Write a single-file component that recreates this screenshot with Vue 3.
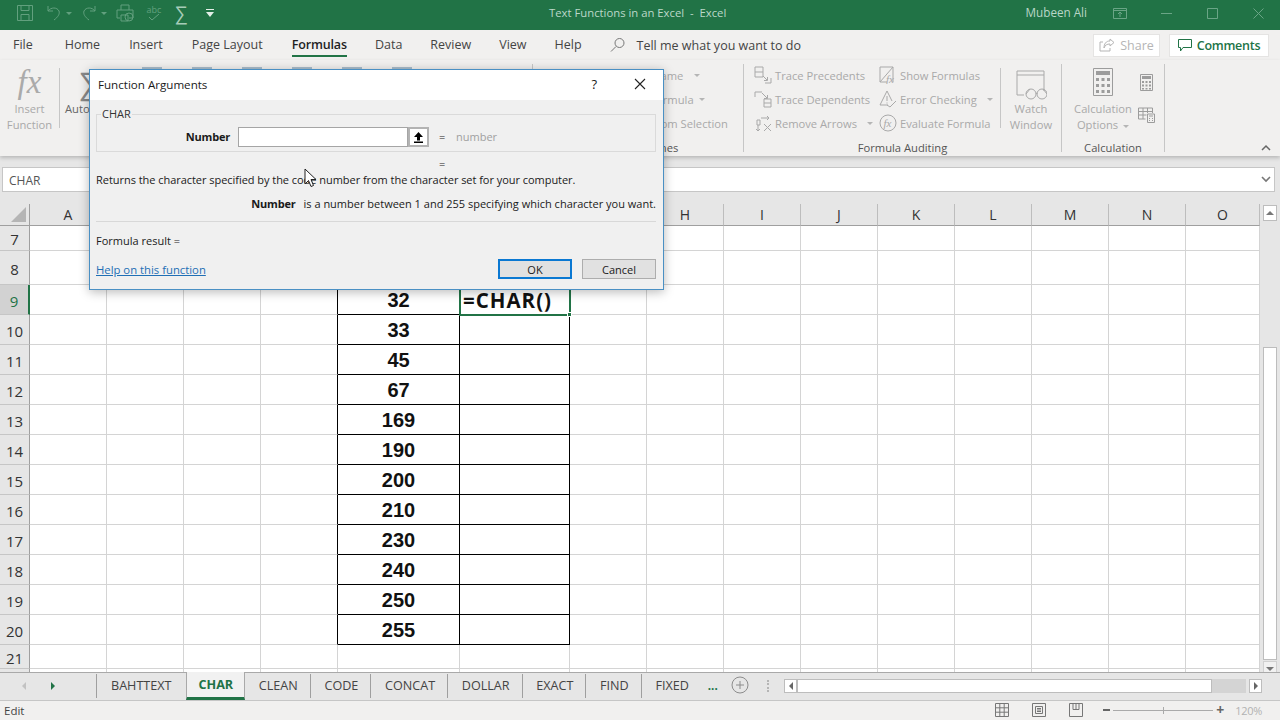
<script setup>
const tabs = ['File', 'Home', 'Insert', 'Page Layout', 'Formulas', 'Data', 'Review', 'View', 'Help']
const sheets = ['BAHTTEXT', 'CHAR', 'CLEAN', 'CODE', 'CONCAT', 'DOLLAR', 'EXACT', 'FIND', 'FIXED']
const columns = ['A', 'B', 'C', 'D', 'E', 'F', 'G', 'H', 'I', 'J', 'K', 'L', 'M', 'N', 'O']
const rows = [7, 8, 9, 10, 11, 12, 13, 14, 15, 16, 17, 18, 19, 20, 21, 22]
const values = {
  9: 32, 10: 33, 11: 45, 12: 67, 13: 169, 14: 190,
  15: 200, 16: 210, 17: 230, 18: 240, 19: 250, 20: 255
}

function cellClass(col, row) {
  return {
    'edge-right': row <= 20 && (col === 'D' || col === 'E' || col === 'F'),
    'edge-bottom': row >= 8 && row <= 20 && (col === 'E' || col === 'F'),
    active: col === 'F' && row === 9,
    last: row === 22
  }
}

function tabClass(sheet) {
  return {
    on: sheet === 'CHAR',
    'no-sep': sheet === 'BAHTTEXT' || sheet === 'FIXED'
  }
}
</script>

<template>
  <div class="window">
    <header class="titlebar">
      <div class="qat">
        <svg class="ico" width="18" height="18" viewBox="0 0 18 18"><path d="M1.5 1.5h15v15h-15z M5 1.5v5h8v-5 M5 16.5v-6h8v6" /></svg>
        <svg class="ico undo" width="16" height="16" viewBox="0 0 16 16"><path d="M2 1v5h5 M2 6c3-4 9-4 11 0 1 3-1 6-5 9" /></svg>
        <i class="caret" />
        <svg class="ico redo" width="16" height="16" viewBox="0 0 16 16"><path d="M14 1v5h-5 M14 6c-3-4-9-4-11 0-1 3 1 6 5 9" /></svg>
        <i class="caret" />
        <svg class="ico print" width="18" height="18" viewBox="0 0 18 18"><path d="M5 6V1h8v5 M1 6h16v8H13 M1 6v8h3 M5 11h7v6H5z" /><circle cx="13" cy="13" r="4" /></svg>
        <span class="abc">abc<svg class="ico" width="12" height="7" viewBox="0 0 12 7"><path d="M1 3l3 3 7-6" /></svg></span>
        <span class="sigma">∑</span>
        <svg class="more" width="8" height="8" viewBox="0 0 8 8"><path d="M0 0h8v1H0z M0 3h8L4 8z" /></svg>
      </div>
      <div class="doc-title">Text Functions in an Excel&nbsp; -&nbsp; Excel</div>
      <div class="win-side">
        <span class="user">Mubeen Ali</span>
        <button class="win-btn"><svg class="ico" width="14" height="11" viewBox="0 0 14 11"><path d="M.5.5h13v10H.5z M.5 2.5h13 M7 9V4.500 M5 6l2-2 2 2" /></svg></button>
        <button class="win-btn"><svg class="ico" width="11" height="11" viewBox="0 0 11 11"><path d="M0 5.500h11" /></svg></button>
        <button class="win-btn"><svg class="ico" width="11" height="11" viewBox="0 0 11 11"><path d="M.5.5h10v10H.5z" /></svg></button>
        <button class="win-btn"><svg class="ico" width="11" height="11" viewBox="0 0 11 11"><path d="M.5.5l10 10 M10.500.5l-10 10" /></svg></button>
      </div>
    </header>

    <nav class="menu">
      <span v-for="tab in tabs" :key="tab" :class="['menu-item', { current: tab === 'Formulas' }]">{{ tab }}</span>
      <span class="tell">
        <svg class="ico" width="16" height="16" viewBox="0 0 16 16"><circle cx="9.500" cy="6" r="4.500" /><path d="M6 9.500l-5 5" /></svg>
        Tell me what you want to do
      </span>
      <span class="share">
        <svg class="ico" width="16" height="14" viewBox="0 0 16 14"><path d="M11 1l4 3.500-4 3.500V6C8 6 6 7 5 10 5 6 7 2.800 11 3z M4 4H1v9h10v-3" /></svg>
        Share
      </span>
      <span class="comments">
        <svg class="ico" width="14" height="13" viewBox="0 0 14 13"><path d="M.5.500h13v8H5L2.500 12V8.500h-2z" /></svg>
        Comments
      </span>
    </nav>

    <section class="ribbon">
      <div class="group library">
        <div class="fx-btn">
          <span class="fx">fx</span>
          <span class="big-label">Insert<br>Function</span>
        </div>
        <div class="autosum">
          <span class="big-sigma">∑</span>
          <span class="big-label">AutoSum</span>
        </div>
        <i v-for="n in 6" :key="n" class="lib-top" />
      </div>

      <div class="group names">
        <div class="names-body">
          <span class="line">Define Name <i class="dd" /></span>
          <span class="line">Use in Formula<i class="dd near" /></span>
          <span class="line">Create from Selection</span>
        </div>
        <div class="group-label">Defined Names</div>
      </div>

      <div class="group auditing">
        <div class="audit-body">
          <div class="audit-col">
            <span class="line">
              <svg class="ico" width="18" height="18" viewBox="0 0 18 18"><path d="M1 1h8v10H1z M1 6h8 M17 12v5h-6 M9 10l4 4 M13.500 11v3.500H10" /></svg>
              Trace Precedents
            </span>
            <span class="line">
              <svg class="ico" width="18" height="18" viewBox="0 0 18 18"><path d="M1 7V2h7 M10 9h7v8h-7z M10 13h7 M8 3l5 5 M13.500 5v3.500H10" /></svg>
              Trace Dependents
            </span>
            <span class="line">
              <svg class="ico" width="18" height="18" viewBox="0 0 18 18"><path d="M3 6h3v5H3z M4 11v6 M2 15l2 2 2-2 M7 4h8 M13 2l2 2-2 2 M10 10l7 7 M17 10l-7 7" /></svg>
              Remove Arrows <i class="dd wide" />
            </span>
          </div>
          <div class="audit-col">
            <span class="line">
              <svg class="ico" width="18" height="18" viewBox="0 0 18 18"><path d="M1 1h13v15 M1 1v15h7 M1 16L14 1" /><text x="7" y="17" class="svg-fx">fx</text></svg>
              Show Formulas
            </span>
            <span class="line">
              <svg class="ico" width="18" height="18" viewBox="0 0 18 18"><path d="M8 1L1 15h8 M8 1l5 10 M8 6v5 M8 12.500v1 M8 15l3 2 6-6" /></svg>
              Error Checking <i class="dd wide" />
            </span>
            <span class="line">
              <svg class="ico" width="18" height="18" viewBox="0 0 18 18"><circle cx="9" cy="9" r="8" /><text x="4.500" y="13" class="svg-fx">fx</text></svg>
              Evaluate Formula
            </span>
          </div>
          <div class="watch">
            <svg class="ico" width="32" height="30" viewBox="0 0 32 30"><path d="M2 1h27v20 M2 1v24h7 M2 5h27" /><circle cx="16" cy="24" r="5" /><circle cx="27" cy="24" r="5" /><path d="M21 24c1-1.500 1-1.500 1 0 M11 24l4-5 M32 24l-4-5" /></svg>
            <span class="big-label">Watch<br>Window</span>
          </div>
        </div>
        <div class="group-label">Formula Auditing</div>
      </div>

      <div class="group calculation">
        <div class="calc-body">
          <div class="calc-big">
            <svg class="ico" width="20" height="28" viewBox="0 0 20 28"><path d="M.5.500h19v27H.5z" /><path class="solid" d="M3 3h14v4H3z M3 10h3v3H3z M8.500 10h3v3h-3z M14 10h3v3h-3z M3 16h3v3H3z M8.500 16h3v3h-3z M14 16h3v3h-3z M3 22h3v3H3z M8.500 22h3v3h-3z M14 22h3v3h-3z" /></svg>
            <span class="big-label">Calculation<br>Options <i class="dd near" /></span>
          </div>
          <div class="calc-small">
            <svg class="ico" width="13" height="17" viewBox="0 0 13 17"><path d="M.5.500h12v16H.5z" /><path class="solid" d="M2 2h9v3H2z M2 7h2v2H2z M5.500 7h2v2h-2z M9 7h2v2H9z M2 10.500h2v2H2z M5.500 10.500h2v2h-2z M9 10.500h2v2H9z M2 14h2v1.500H2z M5.500 14h2v1.500h-2z M9 14h2v1.500H9z" /></svg>
            <svg class="ico" width="17" height="16" viewBox="0 0 17 16"><path d="M.5 1h14v5 M.5 1v11h7 M.5 4.500h14 M.5 8h8 M5 1v11 M9.500 1v5 M9.500 7h7v8.500h-7z M11 9h4 M11 11.500h1 M14 11.500h1 M11 13.500h1 M14 13.500h1" /></svg>
          </div>
        </div>
        <div class="group-label">Calculation</div>
      </div>

      <svg class="collapse" width="10" height="7" viewBox="0 0 10 7"><path d="M1 6l4-4 4 4" /></svg>
    </section>

    <div class="formula-row">
      <div class="name-box">CHAR</div>
      <div class="formula-input">
        <svg class="chevron" width="10" height="7" viewBox="0 0 10 7"><path d="M1 1l4 4 4-4" /></svg>
      </div>
    </div>

    <div class="sheet">
      <div class="grid">
        <div class="corner"><i class="corner-mark" /></div>
        <div v-for="col in columns" :key="col" class="col-head">{{ col }}</div>
        <template v-for="row in rows" :key="row">
          <div :class="['row-head', { selected: row === 9, last: row === 22 }]">{{ row === 22 ? '' : row }}</div>
          <div v-for="col in columns" :key="col" :class="['cell', cellClass(col, row)]">
            <template v-if="col === 'E'">{{ values[row] }}</template>
            <span v-else-if="col === 'F' && row === 9" class="entry">=CHAR()</span>
          </div>
        </template>
      </div>
      <div class="vscroll">
        <span class="scroll-btn up"><i class="tri-up" /></span>
        <span class="vthumb" />
        <span class="scroll-btn down"><i class="tri-down" /></span>
      </div>
    </div>

    <div class="sheet-bar">
      <div class="sheet-nav">
        <i class="tri-left dim" />
        <i class="tri-right green" />
      </div>
      <span v-for="sheet in sheets" :key="sheet" :class="['sheet-tab', tabClass(sheet)]">{{ sheet }}</span>
      <span class="dots">...</span>
      <span class="add-sheet">
        <svg class="ico" width="18" height="18" viewBox="0 0 18 18"><circle cx="9" cy="9" r="8" /><path d="M9 5v8 M5 9h8" /></svg>
      </span>
      <i class="splitter" />
      <div class="hscroll">
        <span class="h-btn"><i class="tri-left" /></span>
        <span class="hthumb" />
        <span class="h-rest" />
        <span class="h-btn end"><i class="tri-right" /></span>
      </div>
    </div>

    <footer class="status">
      <span class="mode">Edit</span>
      <div class="status-right">
        <svg class="ico" width="14" height="14" viewBox="0 0 14 14"><path d="M.5.500h13v13H.5z M.5 4.800h13 M.5 9.200h13 M4.800.5v13 M9.200.5v13" /></svg>
        <svg class="ico" width="14" height="14" viewBox="0 0 14 14"><path d="M.5.500h13v13H.5z M3.500 3.500h7v7h-7z M5 5.500h4 M5 7h4 M5 8.500h4" /></svg>
        <svg class="ico" width="14" height="14" viewBox="0 0 14 14"><path d="M.5.500h13v13H.5z M4 .5v6h6v-6 M7 .5v6" /></svg>
        <div class="zoom">
          <i class="zoom-minus" />
          <span class="slider"><i class="slider-tick" /></span>
          <span class="zoom-plus">+</span>
        </div>
        <span class="zoom-value">120%</span>
      </div>
    </footer>

    <div class="dialog">
      <div class="dialog-title">
        <span>Function Arguments</span>
        <span class="help-mark">?</span>
        <svg class="close" width="12" height="12" viewBox="0 0 12 12"><path d="M1 1l10 10 M11 1L1 11" /></svg>
      </div>
      <div class="dialog-body">
        <fieldset class="args">
          <legend>CHAR</legend>
          <div class="arg-row">
            <label class="arg-label">Number</label>
            <span class="arg-input" />
            <span class="arg-btn">
              <svg width="11" height="11" viewBox="0 0 11 11"><path d="M5.500 0L10 5H7v3.500H4V5H1z M1 9.500h9V11H1z" /></svg>
            </span>
            <span class="equals">=</span>
            <span class="arg-hint">number</span>
          </div>
        </fieldset>
        <div class="equals-line">=</div>
        <div class="desc">Returns the character specified by the code number from the character set for your computer.</div>
        <div class="arg-desc"><b>Number</b><span>is a number between 1 and 255 specifying which character you want.</span></div>
        <div class="rule" />
        <div class="result">Formula result =</div>
        <div class="actions">
          <a class="help-link">Help on this function</a>
          <button class="dlg-btn default">OK</button>
          <button class="dlg-btn">Cancel</button>
        </div>
      </div>
    </div>

    <svg class="cursor" width="13" height="20" viewBox="0 0 13 20">
      <path d="M1 1v15l3.500-3.500 2.500 6 2.500-1-2.500-6H12z" />
    </svg>
  </div>
</template>

<style>
html, body {
  margin: 0;
  background: #e6e6e6;
}
</style>

<style scoped>
.window {
  position: relative;
  width: 1280px;
  height: 720px;
  display: flex;
  flex-direction: column;
  overflow: hidden;
  font-family: "Open Sans", "Noto Sans", sans-serif;
  font-size: 11.5px;
  color: #444;
  background: #e6e6e6;
}

.ico {
  fill: none;
  stroke: currentColor;
  stroke-width: 1;
  flex: none;
}

.ico .solid {
  fill: currentColor;
  stroke: none;
}

.svg-fx {
  font-family: "Liberation Serif", serif;
  font-style: italic;
  font-size: 11px;
  fill: currentColor;
  stroke: none;
}

/* title bar */
.titlebar {
  height: 30px;
  flex: none;
  box-sizing: border-box;
  padding-bottom: 4px;
  display: flex;
  align-items: center;
  background: #217346;
  color: #b7d5c4;
}

.qat {
  display: flex;
  align-items: center;
  color: #62a07e;
  padding-left: 16px;
  width: 484px;
}

.qat .undo { margin-left: 12px; }
.qat .redo { margin-left: 9px; }
.qat .print { margin-left: 9px; }

.caret {
  width: 0;
  height: 0;
  margin-left: 4px;
  border: 3px solid transparent;
  border-top: 3px solid #62a07e;
  border-bottom: 0;
}

.abc {
  margin-left: 12px;
  width: 16px;
  font-size: 9px;
  line-height: 9px;
  display: flex;
  flex-direction: column;
  align-items: center;
}

.sigma {
  margin-left: 13px;
  font-size: 19px;
  line-height: 20px;
  color: #a6ccb8;
}

.more {
  margin-left: 19px;
  fill: #e3efe8;
}

.doc-title {
  width: 177px;
  margin-left: 49px;
  margin-bottom: 2px;
  font-size: 11.3px;
  white-space: nowrap;
  color: #bcd8c9;
}

.win-side {
  margin-left: auto;
  margin-right: -1px;
  display: flex;
  align-items: center;
}

.user {
  font-size: 11.7px;
  margin-right: 10px;
  margin-bottom: 2px;
  color: #b9d6c6;
}

.win-btn {
  width: 46px;
  height: 26px;
  padding: 0;
  border: 0;
  background: none;
  color: #6aa586;
  display: flex;
  align-items: center;
  justify-content: center;
}

/* tabs */
.menu {
  height: 30px;
  flex: none;
  display: flex;
  align-items: center;
  background: #f1f0ef;
  padding-left: 13px;
  font-size: 12.5px;
}

.menu-item {
  margin-right: 29px;
  height: 30px;
  line-height: 30px;
  color: #444;
  white-space: nowrap;
  box-sizing: border-box;
}

.menu-item:first-child {
  margin-right: 32px;
}

.menu-item.current {
  color: #1f1f1f;
  font-weight: 600;
  letter-spacing: -0.15px;
  margin-right: 28px;
  border-bottom: 2px solid #217346;
  height: 27px;
  line-height: 30px;
  align-self: flex-start;
}

.menu-item.current ~ .menu-item {
  margin-right: 28px;
}

.tell {
  display: flex;
  align-items: center;
  gap: 11px;
  white-space: nowrap;
  color: #444;
}

.tell .ico {
  color: #777;
}

.share, .comments {
  height: 23px;
  box-sizing: border-box;
  display: flex;
  align-items: center;
  justify-content: center;
  gap: 5px;
  background: #fff;
  border: 1px solid #e5e4e3;
}

.share {
  margin-left: auto;
  width: 67px;
  color: #b5b5b5;
}

.comments {
  margin-left: 9px;
  margin-right: 11px;
  width: 100px;
  color: #217346;
  font-weight: 600;
  letter-spacing: -0.25px;
}

/* ribbon */
.ribbon {
  position: relative;
  z-index: 1;
  height: 96px;
  flex: none;
  display: flex;
  background: #f1f0ef;
  box-shadow: 0 2px 4px rgba(0, 0, 0, 0.2);
  color: #a9a9a9;
  font-size: 11.2px;
}

.group {
  display: flex;
  flex-direction: column;
  box-sizing: border-box;
  height: 88px;
  margin-top: 4px;
  border-right: 1px solid #c6c6c6;
}

.group-label {
  margin-top: auto;
  height: 16px;
  line-height: 16px;
  text-align: center;
  color: #555;
  transform: translateY(4px);
}

.library {
  width: 533px;
  flex-direction: row;
}

.fx-btn {
  width: 60px;
  height: 60px;
  margin-top: 4px;
  box-sizing: border-box;
  border-right: 1px solid #c6c6c6;
  text-align: center;
  display: flex;
  flex-direction: column;
  align-items: center;
}

.fx {
  flex: none;
  font-family: "Liberation Serif", serif;
  font-style: italic;
  font-size: 33px;
  line-height: 28px;
  height: 33px;
  color: #aaa;
}

.big-label {
  flex: none;
  display: block;
  line-height: 16px;
  text-align: center;
  white-space: nowrap;
}

.autosum {
  width: 46px;
  padding-left: 6px;
  margin-top: 4px;
  display: flex;
  flex-direction: column;
  align-items: center;
  color: #666;
}

.big-sigma {
  font-size: 30px;
  line-height: 30px;
  height: 33px;
  color: #888;
}

.lib-top {
  width: 20px;
  height: 20px;
  margin-left: 30px;
  background: #a9bccb;
  margin-top: 3px;
}

.names {
  width: 211px;
}

.names-body {
  margin-top: -1px;
  padding: 0 0 0 82px;
  display: flex;
  flex-direction: column;
}

.line {
  height: 24px;
  display: flex;
  align-items: center;
  gap: 3px;
  white-space: nowrap;
}

.dd {
  display: inline-block;
  width: 0;
  height: 0;
  margin-left: 8px;
  border-left: 3px solid transparent;
  border-right: 3px solid transparent;
  border-top: 3px solid #b5b5b5;
  vertical-align: middle;
}

.dd.near {
  margin-left: 2px;
}

.dd.wide {
  margin-left: 7px;
}

.auditing {
  width: 318px;
}

.audit-body {
  display: flex;
  padding-left: 10px;
  margin-top: -1px;
}

.audit-col {
  width: 125px;
  display: flex;
  flex-direction: column;
}

.audit-col + .audit-col {
  width: 121px;
}

.watch {
  width: 61px;
  height: 60px;
  margin-top: 5px;
  box-sizing: border-box;
  border-left: 1px solid #c6c6c6;
  display: flex;
  flex-direction: column;
  align-items: center;
}

.watch .ico {
  height: 30px;
  margin-top: 2px;
  margin-bottom: 1px;
}

.calculation {
  width: 103px;
}

.calc-body {
  display: flex;
}

.calc-big {
  width: 82px;
  margin-right: -6px;
  display: flex;
  flex-direction: column;
  align-items: center;
  padding-top: 4px;
}

.calc-big .ico {
  margin-bottom: 5px;
  color: #9c9c9c;
}

.calc-small {
  display: flex;
  flex-direction: column;
  align-items: center;
  gap: 16px;
  padding-top: 10px;
  color: #9c9c9c;
}

.collapse {
  position: absolute;
  right: 9px;
  bottom: 5px;
  fill: none;
  stroke: #666;
  stroke-width: 1.5;
}

/* formula bar */
.formula-row {
  height: 48px;
  flex: none;
  display: flex;
  padding: 11px 5px 12px 2px;
  box-sizing: border-box;
  background: #e6e6e6;
}

.name-box, .formula-input {
  box-sizing: border-box;
  height: 25px;
  background: #fff;
  border: 1px solid #c6c6c6;
}

.name-box {
  width: 120px;
  line-height: 25px;
  padding-left: 6px;
  font-size: 12px;
  color: #555;
}

.formula-input {
  flex: 1;
  display: flex;
  align-items: center;
  justify-content: flex-end;
  padding-right: 3px;
}

.chevron {
  fill: none;
  stroke: #777;
  stroke-width: 1.6;
}

/* sheet */
.sheet {
  height: 468px;
  flex: none;
  display: flex;
}

.grid {
  width: 1260px;
  display: grid;
  grid-template-columns: 30px repeat(4, 77px) 122px 110px repeat(8, 77px) 74px;
  grid-template-rows: 22px 25px 34px repeat(12, 30px) 24px 3px;
  background: #fff;
  overflow: hidden;
}

.corner, .col-head {
  background: #e6e6e6;
  box-sizing: border-box;
  border-bottom: 1px solid #9f9f9f;
  border-right: 1px solid #bdbdbd;
}

.corner {
  display: flex;
  align-items: flex-end;
  justify-content: flex-end;
  padding: 0 3px 3px 0;
  border-right-color: #9f9f9f;
}

.corner-mark {
  width: 0;
  height: 0;
  border-left: 15px solid transparent;
  border-bottom: 15px solid #b5b5b5;
}

.col-head {
  text-align: center;
  line-height: 21px;
  font-size: 14px;
  color: #333;
}

.row-head {
  background: #e6e6e6;
  box-sizing: border-box;
  padding-top: 2px;
  border-right: 1px solid #9f9f9f;
  border-bottom: 1px solid #c6c6c6;
  display: flex;
  align-items: center;
  justify-content: center;
  font-size: 15px;
  color: #333;
}

.row-head.selected {
  background: #d2d2d2;
  color: #217346;
  border-right: 2px solid #217346;
}

.row-head.last, .cell.last {
  border-bottom: 0;
}

.cell {
  box-sizing: border-box;
  padding-top: 2px;
  border-right: 1px solid #d4d4d4;
  border-bottom: 1px solid #d4d4d4;
  display: flex;
  align-items: center;
  justify-content: center;
  font-family: "Liberation Sans", sans-serif;
  font-size: 20px;
  font-weight: bold;
  color: #111;
}

.cell.edge-right {
  border-right-color: #000;
}

.cell.edge-bottom {
  border-bottom-color: #000;
}

.cell.active {
  position: relative;
  justify-content: flex-start;
  outline: 2px solid #217346;
  outline-offset: -1px;
  padding-left: 3px;
  padding-top: 0;
}

.cell.active::after {
  content: "";
  position: absolute;
  right: -3px;
  bottom: -3px;
  width: 5px;
  height: 5px;
  background: #217346;
  border: 1px solid #fff;
  box-sizing: border-box;
}

.entry {
  font-family: "Open Sans", sans-serif;
  font-size: 20.5px;
  font-weight: 700;
  letter-spacing: 1px;
}

.vscroll {
  flex: 1;
  display: flex;
  flex-direction: column;
  box-sizing: border-box;
  padding: 1px 3px 0 3px;
  background: #e6e6e6;
}

.scroll-btn {
  height: 14px;
  flex: none;
  background: #fff;
  border: 1px solid #bdbdbd;
  display: flex;
  align-items: center;
  justify-content: center;
}

.scroll-btn.down {
  margin-top: 1px;
  background: #f1f1f1;
  border-color: #d0d0d0;
}

.vthumb {
  margin-top: 126px;
  height: 311px;
  flex: none;
  background: #fff;
  border: 1px solid #bdbdbd;
}

.tri-up, .tri-down, .tri-left, .tri-right {
  display: block;
  width: 0;
  height: 0;
  border: 4px solid transparent;
}

.tri-up {
  border-top: 0;
  border-bottom-color: #777;
}

.tri-down {
  border-bottom: 0;
  border-top-color: #777;
}

.tri-left {
  border-left: 0;
  border-right-color: #666;
}

.tri-right {
  border-right: 0;
  border-left-color: #666;
}

.tri-left.dim {
  border-right-color: #c2c2c2;
}

.tri-right.green {
  border-left-color: #217346;
}

/* sheet tabs */
.sheet-bar {
  height: 29px;
  flex: none;
  box-sizing: border-box;
  display: flex;
  align-items: flex-start;
  background: #e6e6e6;
  border-top: 1px solid #a9a9a9;
  border-bottom: 1px solid #c6c6c6;
}

.sheet-nav {
  width: 97px;
  height: 24px;
  box-sizing: border-box;
  display: flex;
  align-items: center;
  gap: 25px;
  padding-left: 22px;
  border-right: 1px solid #9f9f9f;
  margin-top: 1px;
}

.sheet-tab {
  height: 24px;
  margin-top: 1px;
  padding: 0 12px 0 13.7px;
  line-height: 24px;
  font-size: 12.6px;
  color: #444;
  border-right: 1px solid #9f9f9f;
  white-space: nowrap;
}

.sheet-tab:first-of-type {
  padding-left: 14px;
}

.sheet-tab.no-sep {
  border-right-color: transparent;
}

.sheet-tab.on {
  height: 22px;
  margin-top: -1px;
  margin-left: 2px;
  padding: 3px 11px 0 11px;
  line-height: 20px;
  color: #217346;
  font-weight: 700;
  background: #f1f1f1;
  border: 1px solid #a9a9a9;
  border-top: 0;
  border-bottom: 3px solid #217346;
}

.dots {
  margin: 1px 0 0 6px;
  color: #217346;
  font-weight: 700;
  line-height: 24px;
}

.add-sheet {
  margin: 3px 0 0 13px;
  color: #8c8c8c;
  display: flex;
}

.splitter {
  width: 0;
  height: 12px;
  margin: 7px 0 0 18px;
  border-left: 2px dotted #b5b5b5;
}

.hscroll {
  margin-top: 6px;
  margin-left: auto;
  margin-right: 18px;
  width: 478px;
  height: 14px;
  display: flex;
}

.h-btn {
  width: 13px;
  flex: none;
  box-sizing: border-box;
  background: #fff;
  border: 1px solid #bdbdbd;
  display: flex;
  align-items: center;
  justify-content: center;
}

.h-btn.end {
  margin-left: 3px;
}

.hthumb {
  width: 415px;
  box-sizing: border-box;
  background: #fff;
  border: 1px solid #bdbdbd;
}

.h-rest {
  width: 34px;
  background: #d4d4d4;
}

/* status */
.status {
  flex: 1;
  display: flex;
  align-items: center;
  justify-content: space-between;
  background: #f1f0ef;
  padding: 0 18px 1px 4px;
}

.mode {
  font-size: 11.5px;
  color: #444;
}

.status-right {
  display: flex;
  align-items: center;
  color: #777;
}

.status-right .ico + .ico {
  margin-left: 23px;
}

.zoom {
  margin-left: 20px;
  display: flex;
  align-items: center;
}

.zoom-minus {
  width: 7px;
  height: 2px;
  background: #666;
}

.slider {
  position: relative;
  width: 100px;
  height: 1px;
  margin: 0 3px;
  background: #aaa;
}

.slider-tick {
  position: absolute;
  left: 50px;
  top: -3px;
  width: 1px;
  height: 7px;
  background: #aaa;
}

.zoom-plus {
  font-size: 14px;
  line-height: 14px;
  font-weight: 700;
  color: #666;
}

.zoom-value {
  margin-left: 11px;
  font-size: 11px;
  color: #b2b2b2;
  letter-spacing: -0.3px;
}

/* dialog */
.dialog {
  position: absolute;
  z-index: 5;
  left: 89px;
  top: 69px;
  width: 575px;
  height: 221px;
  box-sizing: border-box;
  border: 1px solid #4a90c4;
  background: #f0f0f0;
  box-shadow: 0 2px 10px rgba(0, 0, 0, 0.28);
  font-size: 11px;
  color: #1a1a1a;
  display: flex;
  flex-direction: column;
}

.dialog-title {
  height: 30px;
  flex: none;
  box-sizing: border-box;
  padding: 0 0 2px 8px;
  display: flex;
  align-items: center;
  background: #fff;
  font-size: 11.6px;
}

.help-mark {
  margin-left: auto;
  font-size: 13px;
  margin-right: 37px;
}

.close {
  margin-right: 17px;
  fill: none;
  stroke: #222;
  stroke-width: 1.1;
}

.dialog-body {
  flex: 1;
  display: flex;
  flex-direction: column;
  padding: 0 7px 0 6px;
}

.args {
  margin: 7px 0 0;
  padding: 0 0 4px;
  border: 1px solid #dadada;
}

.args legend {
  margin-left: 4px;
  padding: 0 1px;
  line-height: 14px;
  color: #333;
}

.arg-row {
  display: flex;
  align-items: center;
  height: 20px;
  margin-top: 6px;
}

.arg-label {
  width: 133px;
  text-align: right;
  font-weight: 700;
  margin-right: 8px;
  margin-bottom: 2px;
  letter-spacing: -0.2px;
}

.arg-input {
  width: 170px;
  height: 20px;
  box-sizing: border-box;
  background: #fff;
  border: 1px solid #a5a5a5;
}

.arg-btn {
  width: 21px;
  height: 20px;
  box-sizing: border-box;
  background: #fff;
  border: 2px solid #b3b3b3;
  display: flex;
  align-items: center;
  justify-content: center;
}

.equals {
  margin-left: 10px;
  margin-bottom: 2px;
  width: 17px;
}

.arg-hint {
  margin-bottom: 2px;
  color: #a0a0a0;
}

.equals-line {
  margin-top: 5px;
  line-height: 14px;
  padding-left: 343px;
}

.desc {
  margin-top: 2px;
  line-height: 14px;
  letter-spacing: -0.04px;
  white-space: nowrap;
}

.arg-desc {
  margin-top: 10px;
  line-height: 14px;
  display: flex;
  justify-content: flex-end;
  gap: 8px;
  white-space: nowrap;
}

.arg-desc b {
  letter-spacing: -0.2px;
}

.rule {
  height: 1px;
  margin-top: 10px;
  background: #d8d8d8;
}

.result {
  margin-top: 12px;
  line-height: 14px;
}

.actions {
  margin-top: 11px;
  display: flex;
  align-items: center;
}

.help-link {
  margin-right: auto;
  font-size: 11.3px;
  color: #1f6fb5;
  text-decoration: underline;
}

.dlg-btn {
  width: 74px;
  height: 20px;
  padding: 0;
  box-sizing: border-box;
  border: 1px solid #adadad;
  background: #e1e1e1;
  font: inherit;
  color: #1a1a1a;
}

.dlg-btn.default {
  border: 2px solid #0a78d2;
  margin-right: 10px;
}

.cursor {
  position: absolute;
  z-index: 6;
  left: 304px;
  top: 168px;
  fill: #fff;
  stroke: #222;
  stroke-width: 1;
}
</style>
